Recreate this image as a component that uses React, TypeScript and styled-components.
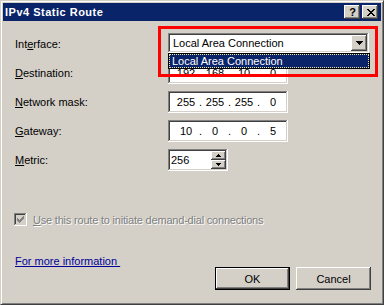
import {Fragment} from "react";
import styled, {createGlobalStyle} from "styled-components";

const GlobalStyle = createGlobalStyle`
  html, body {
    margin: 0;
    padding: 0;
    background: #d4d0c8;
  }
  body {
    font-family: "Liberation Sans", Arial, sans-serif;
    font-size: 11px;
    color: #000;
  }
`

const raised = `
  background: #d4d0c8;
  box-shadow: inset -1px -1px #404040, inset 1px 1px #ffffff, inset -2px -2px #808080, inset 2px 2px #d4d0c8;
`

const sunken = `
  box-shadow: inset -1px -1px #ffffff, inset 1px 1px #808080, inset -2px -2px #d4d0c8, inset 2px 2px #404040;
`

const Window = styled.div`
  position: relative;
  width: 384px;
  height: 305px;
  box-sizing: border-box;
  background: #d4d0c8;
  border: 1px solid;
  border-color: #d4d0c8 #404040 #404040 #d4d0c8;
  box-shadow: inset 1px 1px #ffffff, inset -1px -1px #808080;
  padding: 2px;
  display: flex;
  flex-direction: column;
`

const TitleBar = styled.div`
  height: 18px;
  flex: none;
  background: #0a246a;
  display: flex;
  align-items: center;
  padding: 0 2px 0 2px;
`

const Title = styled.span`
  color: #fff;
  font-weight: bold;
  font-size: 11px;
  letter-spacing: 0.5px;
  flex: 1;
`

const TitleButtons = styled.div`
  display: flex;
  gap: 2px;
  margin-right: 1px;
`

const CaptionButton = styled.div`
  ${raised};
  width: 16px;
  height: 14px;
  box-sizing: border-box;
  display: flex;
  align-items: center;
  justify-content: center;
  font-weight: bold;
  font-size: 11px;
  line-height: 14px;
  padding-left: 1px;
`

const Body = styled.div`
  flex: 1;
  padding: 12px 10px 12px 12px;
  display: flex;
  flex-direction: column;
`

const Form = styled.div`
  display: grid;
  grid-template-columns: 153px 1fr;
  grid-auto-rows: 22px;
  row-gap: 7px;
`

const Label = styled.div`
  display: flex;
  align-items: center;
  white-space: pre;
`

const ComboWrap = styled.div`
  position: relative;
  z-index: 2;
`

const Combo = styled.div`
  ${sunken};
  background: #fff;
  width: 201px;
  height: 20px;
  box-sizing: border-box;
  padding: 2px 2px 2px 5px;
  display: flex;
  align-items: center;
`

const ComboText = styled.span`
  flex: 1;
`

const DropButton = styled.div`
  ${raised};
  width: 16px;
  height: 16px;
  display: flex;
  align-items: center;
  justify-content: center;
  padding-left: 1px;
  box-sizing: border-box;
`

const DropList = styled.div`
  position: absolute;
  top: 20px;
  left: 0;
  width: 202px;
  height: 16px;
  box-sizing: border-box;
  border: 1px solid #000;
  background: #fff;
`

const DropItem = styled.div`
  height: 14px;
  box-sizing: border-box;
  background: #0a246a;
  color: #fff;
  border: 1px dotted #f0e8a0;
  padding-left: 2px;
  line-height: 12px;
`

const IpBox = styled.div`
  ${sunken};
  background: #fff;
  width: 120px;
  height: 22px;
  box-sizing: border-box;
  padding-left: 7px;
  display: flex;
  align-items: center;
`

const Octet = styled.span`
  width: 22px;
  text-align: center;
`

const Dot = styled.span`
  width: 7px;
  text-align: center;
`

const SpinBox = styled.div`
  ${sunken};
  background: #fff;
  width: 60px;
  height: 22px;
  box-sizing: border-box;
  padding: 2px 2px 2px 3px;
  display: flex;
  align-items: center;
`

const SpinValue = styled.span`
  flex: 1;
`

const SpinButtons = styled.div`
  display: flex;
  flex-direction: column;
  width: 15px;
  height: 18px;
`

const SpinButton = styled.div`
  ${raised};
  height: 9px;
  display: flex;
  align-items: center;
  justify-content: center;
`

const CheckRow = styled.div`
  margin-top: 42px;
  margin-left: -1px;
  height: 13px;
  display: flex;
  align-items: center;
  gap: 6px;
`

const CheckBox = styled.div`
  ${sunken};
  width: 13px;
  height: 13px;
  background: #d4d0c8;
  display: flex;
  align-items: center;
  justify-content: center;
  flex: none;
`

const DisabledText = styled.span`
  color: #808080;
  text-shadow: 1px 1px #ffffff;
  letter-spacing: -0.2px;
`

const LinkRow = styled.div`
  margin-top: 29px;
  height: 12px;
  line-height: 12px;
`

const Link = styled.a`
  color: #000099;
  text-decoration: underline;
  white-space: pre;
`

const ButtonRow = styled.div`
  display: flex;
  justify-content: flex-end;
  gap: 6px;
`

const PushButton = styled.div<{ $default?: boolean }>`
  width: 75px;
  height: 23px;
  box-sizing: border-box;
  display: flex;
  align-items: center;
  justify-content: center;
  ${({$default}) => $default
    ? `
      border: 1px solid #000;
      background: #d4d0c8;
      box-shadow: inset -1px -1px #404040, inset 1px 1px #ffffff, inset -2px -2px #808080;
    `
    : raised};
`

// red highlight drawn over the screenshot
const Annotation = styled.div`
  position: absolute;
  left: 157px;
  top: 25px;
  width: 220px;
  height: 51px;
  box-sizing: border-box;
  border: 3px solid #ff0000;
  z-index: 3;
  pointer-events: none;
`

const CloseGlyph = () => (
  <svg width="8" height="7" viewBox="0 0 8 7" shapeRendering="crispEdges">
    <path fill="#000"
          d="M0 0h2v1H0zM6 0h2v1H6zM1 1h2v1H1zM5 1h2v1H5zM2 2h4v1H2zM3 3h2v1H3zM2 4h4v1H2zM1 5h2v1H1zM5 5h2v1H5zM0 6h2v1H0zM6 6h2v1H6z"/>
  </svg>
)

const Arrow = ({w, up}: { w: number, up?: boolean }) => {
  const h = Math.ceil(w / 2)
  return (
    <svg width={w} height={h} viewBox={`0 0 ${w} ${h}`} shapeRendering="crispEdges">
      <polygon fill="#000" points={up ? `0,${h} ${w},${h} ${w / 2},0` : `0,0 ${w},0 ${w / 2},${h}`}/>
    </svg>
  )
}

const CheckMark = () => (
  <svg width="7" height="7" viewBox="0 0 7 7" shapeRendering="crispEdges">
    <path fill="#808080"
          d="M6 0h1v1H6zM5 1h2v1H5zM0 2h1v1H0zM4 2h3v1H4zM0 3h2v1H0zM3 3h3v1H3zM0 4h5v1H0zM1 5h3v1H1zM2 6h1v1H2z"/>
  </svg>
)

const IpField = ({octets}: { octets: number[] }) => (
  <IpBox>
    {octets.map((o, i) => (
      <Fragment key={`octet-${i}`}>
        {i > 0 && <Dot>.</Dot>}
        <Octet>{o}</Octet>
      </Fragment>
    ))}
  </IpBox>
)

export default function App() {
  return (
    <>
      <GlobalStyle/>
      <Window>
        <TitleBar>
          <Title>IPv4 Static Route</Title>
          <TitleButtons>
            <CaptionButton>?</CaptionButton>
            <CaptionButton><CloseGlyph/></CaptionButton>
          </TitleButtons>
        </TitleBar>
        <Body>
          <Form>
            <Label>Int<u>e</u>rface:</Label>
            <ComboWrap>
              <Combo>
                <ComboText>Local Area Connection</ComboText>
                <DropButton><Arrow w={7}/></DropButton>
              </Combo>
              <DropList>
                <DropItem>Local Area Connection</DropItem>
              </DropList>
            </ComboWrap>

            <Label><u>D</u>estination:</Label>
            <IpField octets={[192, 168, 10, 0]}/>

            <Label><u>N</u>etwork mask:</Label>
            <IpField octets={[255, 255, 255, 0]}/>

            <Label><u>G</u>ateway:</Label>
            <IpField octets={[10, 0, 0, 5]}/>

            <Label><u>M</u>etric:</Label>
            <SpinBox>
              <SpinValue>256</SpinValue>
              <SpinButtons>
                <SpinButton><Arrow w={5} up/></SpinButton>
                <SpinButton><Arrow w={5}/></SpinButton>
              </SpinButtons>
            </SpinBox>
          </Form>

          <CheckRow>
            <CheckBox><CheckMark/></CheckBox>
            <DisabledText><u>U</u>se this route to initiate demand-dial connections</DisabledText>
          </CheckRow>

          <LinkRow>
            <Link>{"For more information "}</Link>
          </LinkRow>

          <ButtonRow>
            <PushButton $default>OK</PushButton>
            <PushButton>Cancel</PushButton>
          </ButtonRow>
        </Body>
        <Annotation/>
      </Window>
    </>
  )
}
